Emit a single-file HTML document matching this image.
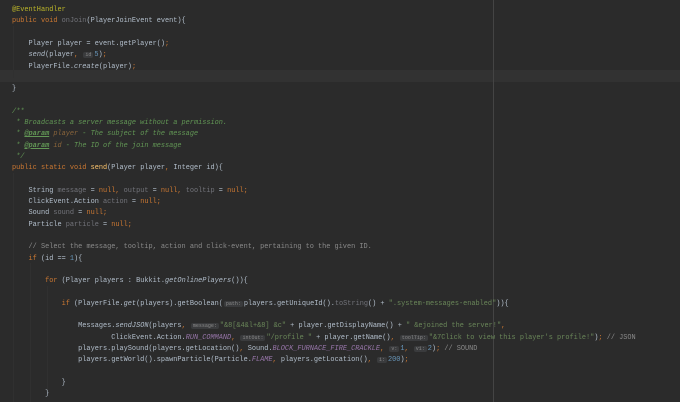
<!DOCTYPE html>
<html><head><meta charset="utf-8"><style>
html,body{margin:0;padding:0}
body{width:680px;height:402px;background:#2b2b2b;overflow:hidden;position:relative;font-family:"Liberation Mono",monospace;font-size:6.9px;color:#b3bfcc}
.l{position:absolute;left:12px;height:11.3px;line-height:11.3px;white-space:pre;margin-top:1.5px}
.k{color:#cc7832}.m{color:#ffc66d}.s{color:#6a8759}.c{color:#8a8a8a}.d{color:#629755;font-style:italic}
.g{color:#72737a}.n{color:#6897bb}.p{color:#9876aa;font-style:italic}.a{color:#bbb529}.i{font-style:italic}
.t{color:#8a8a8a;background:#3a3b3d;border-radius:2px;font-size:5px;padding:0 2px;margin:0 1px}
.u{text-decoration:underline}
.hl{position:absolute;left:0;width:680px;top:70px;height:12px;background:#323232}
.vl{position:absolute;left:493px;top:0;width:1px;height:402px;background:#444}
.ig{position:absolute;width:1px;background:#303030}
</style></head><body>
<div class="hl"></div>
<div class="vl"></div>
<div class="ig" style="left:13px;top:26px;height:52px"></div>
<div class="ig" style="left:13px;top:173px;height:229px"></div>
<div class="ig" style="left:30px;top:263px;height:139px"></div>
<div class="ig" style="left:47px;top:286px;height:105px"></div>
<div class="l" style="top:3.5px"><span class="a">@EventHandler</span></div>
<div class="l" style="top:14.8px"><span class="k">public void </span><span class="g">onJoin</span>(PlayerJoinEvent event){</div>
<div class="l" style="top:37.4px">    Player player = event.getPlayer()<span class="k">;</span></div>
<div class="l" style="top:48.7px">    <span class="i">send</span>(player<span class="k">, </span><span class="t">id</span><span class="n">5</span>)<span class="k">;</span></div>
<div class="l" style="top:60px">    PlayerFile.<span class="i">create</span>(player)<span class="k">;</span></div>
<div class="l" style="top:82.6px">}</div>
<div class="l" style="top:105.2px"><span class="d">/**</span></div>
<div class="l" style="top:116.5px"><span class="d"> * Broadcasts a server message without a permission.</span></div>
<div class="l" style="top:127.8px"><span class="d"> * <b class="u">@param</b> <span style="color:#8a653b">player</span> - The subject of the message</span></div>
<div class="l" style="top:139.1px"><span class="d"> * <b class="u">@param</b> <span style="color:#8a653b">id</span> - The ID of the join message</span></div>
<div class="l" style="top:150.4px"><span class="d"> */</span></div>
<div class="l" style="top:161.7px"><span class="k">public static void </span><span class="m">send</span>(Player player<span class="k">, </span>Integer id){</div>
<div class="l" style="top:184.3px">    String <span class="g">message</span> = <span class="k">null, </span><span class="g">output</span> = <span class="k">null, </span><span class="g">tooltip</span> = <span class="k">null;</span></div>
<div class="l" style="top:195.6px">    ClickEvent.Action <span class="g">action</span> = <span class="k">null;</span></div>
<div class="l" style="top:206.9px">    Sound <span class="g">sound</span> = <span class="k">null;</span></div>
<div class="l" style="top:218.2px">    Particle <span class="g">particle</span> = <span class="k">null;</span></div>
<div class="l" style="top:240.8px">    <span class="c">// Select the message, tooltip, action and click-event, pertaining to the given ID.</span></div>
<div class="l" style="top:252.1px">    <span class="k">if </span>(id == <span class="n">1</span>){</div>
<div class="l" style="top:274.7px">        <span class="k">for </span>(Player players : Bukkit.<span class="i">getOnlinePlayers</span>()){</div>
<div class="l" style="top:297.3px">            <span class="k">if </span>(PlayerFile.<span class="i">get</span>(players).getBoolean(<span class="t">path:</span>players.getUniqueId().<span class="g">toString</span>() + <span class="s">".system-messages-enabled"</span>)){</div>
<div class="l" style="top:319.9px">                Messages.<span class="i">sendJSON</span>(players<span class="k">, </span><span class="t">message:</span><span class="s">"&amp;8[&amp;4&amp;l+&amp;8] &amp;c"</span> + player.getDisplayName() + <span class="s">" &amp;ejoined the server!"</span><span class="k">,</span></div>
<div class="l" style="top:331.2px">                        ClickEvent.Action.<span class="p">RUN_COMMAND</span><span class="k">, </span><span class="t">intOut:</span><span class="s">"/profile "</span> + player.getName()<span class="k">, </span><span class="t">toolTip:</span><span class="s">"&amp;7Click to view this player's profile!"</span>)<span class="k">; </span><span class="c">// JSON</span></div>
<div class="l" style="top:342.5px">                players.playSound(players.getLocation()<span class="k">, </span>Sound.<span class="p">BLOCK_FURNACE_FIRE_CRACKLE</span><span class="k">, </span><span class="t">v:</span><span class="n">1</span><span class="k">, </span><span class="t">v1:</span><span class="n">2</span>)<span class="k">; </span><span class="c">// SOUND</span></div>
<div class="l" style="top:353.8px">                players.getWorld().spawnParticle(Particle.<span class="p">FLAME</span><span class="k">, </span>players.getLocation()<span class="k">, </span><span class="t">i:</span><span class="n">200</span>)<span class="k">;</span></div>
<div class="l" style="top:376.4px">            }</div>
<div class="l" style="top:387.7px">        }</div>
</body></html>
